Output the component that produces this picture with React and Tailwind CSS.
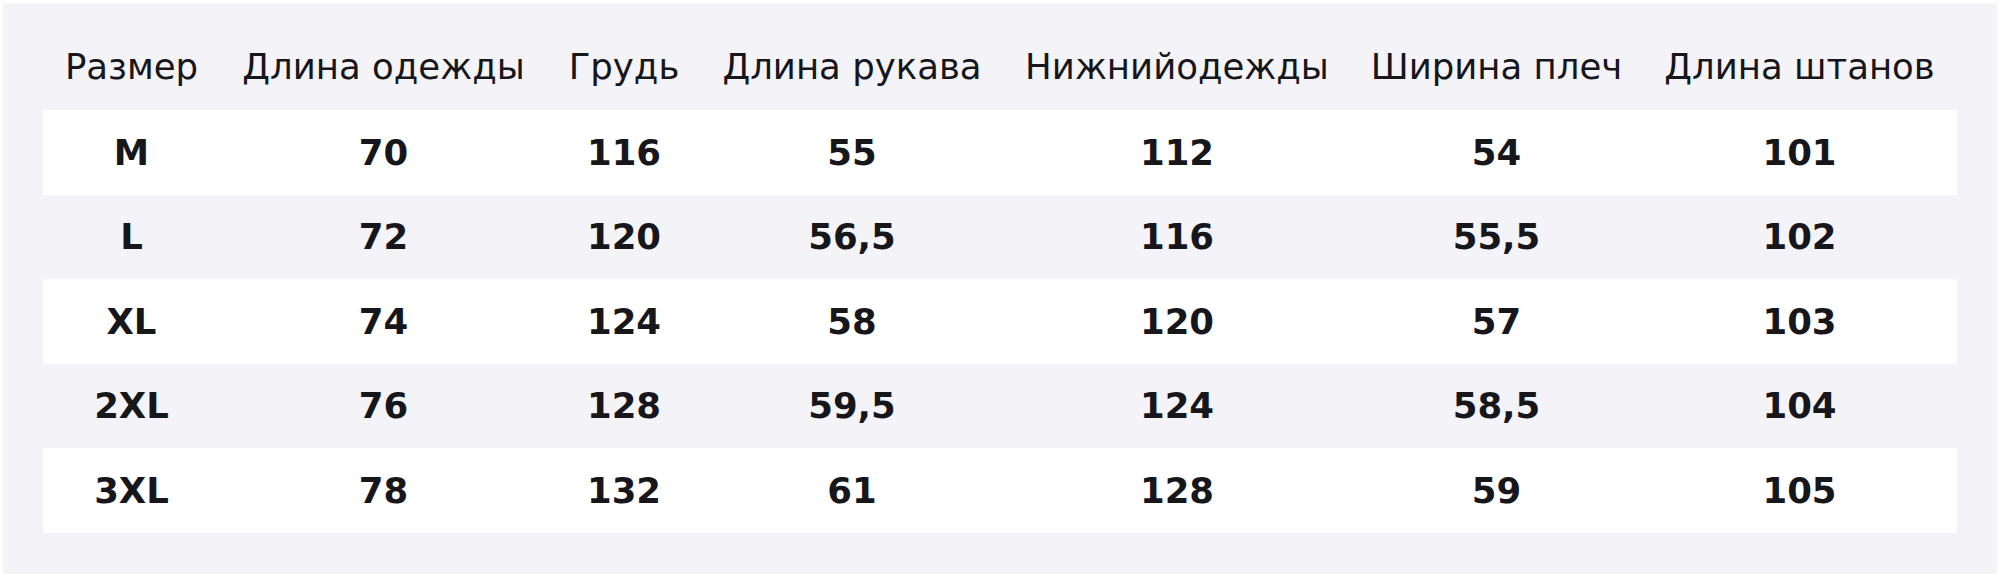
const headers = [
  { label: "Размер", w: "w-[177px]" },
  { label: "Длина одежды", w: "w-[327px]" },
  { label: "Грудь", w: "w-[154px]" },
  { label: "Длина рукава", w: "w-[302px]" },
  { label: "Нижнийодежды", w: "w-[348px]" },
  { label: "Ширина плеч", w: "w-[291px]" },
  { label: "Длина штанов", w: "w-[315px]" },
];

const rows = [
  ["M", "70", "116", "55", "112", "54", "101"],
  ["L", "72", "120", "56,5", "116", "55,5", "102"],
  ["XL", "74", "124", "58", "120", "57", "103"],
  ["2XL", "76", "128", "59,5", "124", "58,5", "104"],
  ["3XL", "78", "132", "61", "128", "59", "105"],
];

export default function App() {
  return (
    <div className="p-[3px] bg-white" style={{ fontFamily: '"DejaVu Sans", sans-serif' }}>
      <div className="bg-[#f4f4f8] px-[40px] pt-[20px] pb-[41px]">
        <table className="table-fixed w-[1914px] border-collapse text-[#16161b] text-[35.5px]">
          <thead>
            <tr>
              {headers.map((h) => (
                <th key={h.label} className={`${h.w} h-[87px] p-0 font-normal whitespace-nowrap text-center align-middle`}>
                  {h.label}
                </th>
              ))}
            </tr>
          </thead>
          <tbody>
            {rows.map((r, i) => (
              <tr key={r[0]} className={i % 2 === 0 ? "bg-white" : ""}>
                {r.map((v, j) => (
                  <td key={j} className="h-[84.6px] p-0 font-bold text-center align-middle whitespace-nowrap">
                    {v}
                  </td>
                ))}
              </tr>
            ))}
          </tbody>
        </table>
      </div>
    </div>
  );
}
